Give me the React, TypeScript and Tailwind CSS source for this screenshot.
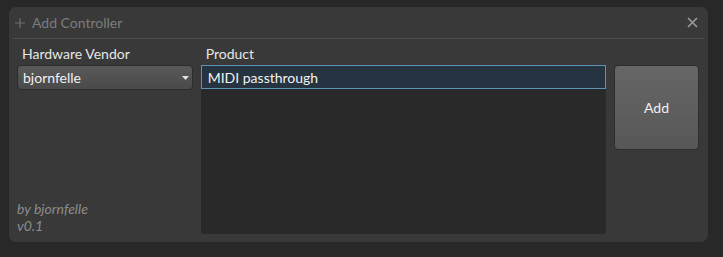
export default function App() {
  return (
    <div
      className="h-[257px] w-[723px] bg-[#282828] pl-[9px] pt-[7px]"
      style={{ fontFamily: "Lato, 'Noto Sans', sans-serif" }}
    >
      <div className="flex h-[235px] w-[699px] flex-col rounded-[7px] bg-[#393939]">
        {/* header */}
        <div className="mx-[4px] flex h-[32px] items-center justify-between border-b border-[#4c4c4c] pl-[2px] pr-[6px]">
          <div className="flex items-center gap-[7px] text-[14px] text-[#7c7c7c]">
            <svg width="10" height="10" viewBox="0 0 10 10">
              <path d="M5 0 V10 M0 5 H10" stroke="#6e6e6e" strokeWidth="1.2" />
            </svg>
            <span>Add Controller</span>
          </div>
          <svg width="11" height="11" viewBox="0 0 11 11" className="text-[#9a9a9a]">
            <path d="M1 1 L10 10 M10 1 L1 10" stroke="currentColor" strokeWidth="1.6" />
          </svg>
        </div>

        {/* body */}
        <div className="flex flex-1 gap-[8px] pl-[8px] pr-[9px] pt-[5px] pb-[8px]">
          <div className="flex w-[176px] flex-col">
            <div className="pl-[5px] text-[14px] leading-[20px] text-[#e6e6e6]">Hardware Vendor</div>
            <div className="mt-[1px] flex h-[25px] items-center justify-between rounded-[4px] border border-[#2c2c2c] bg-gradient-to-b from-[#595959] to-[#4a4a4a] pl-[5px] pr-[2px] text-[14px] text-[#f0f0f0]">
              <span>bjornfelle</span>
              <svg width="7" height="4" viewBox="0 0 7 4" className="mr-[1px]">
                <path d="M0 0 L7 0 L3.5 4 Z" fill="#e0e0e0" />
              </svg>
            </div>
            <div className="mt-auto text-[14px] italic leading-[17px] text-[#8c8c8c]">
              <div>by bjornfelle</div>
              <div>v0.1</div>
            </div>
          </div>

          <div className="flex w-[406px] flex-col">
            <div className="pl-[5px] text-[14px] leading-[20px] text-[#e6e6e6]">Product</div>
            <div className="mt-[1px] flex-1 rounded-b-[3px] bg-[#292929]">
              <div className="flex h-[24px] items-center border border-[#5c94b8] bg-[#253440] pl-[6px] text-[14px] text-[#f2f2f2]">
                MIDI passthrough
              </div>
            </div>
          </div>

          <div className="flex flex-col pt-[21px]">
            <button className="flex h-[85px] w-[85px] items-center justify-center rounded-[4px] border border-[#2e2e2e] bg-gradient-to-b from-[#666666] to-[#575757] text-[14px] text-[#f0f0f0]">
              Add
            </button>
          </div>
        </div>
      </div>
    </div>
  )
}
